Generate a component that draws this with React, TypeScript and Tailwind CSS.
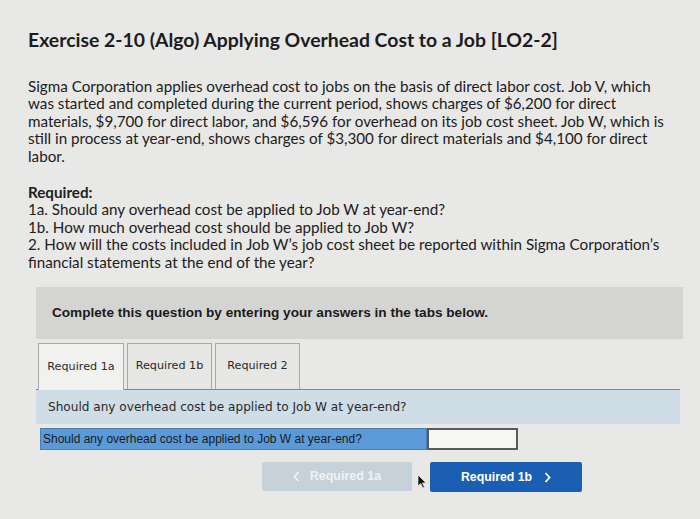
import React from "react";

export default function App() {
  const sans = { fontFamily: "Lato, 'Open Sans', sans-serif" };
  return (
    <div className="relative w-[700px] h-[519px] overflow-hidden bg-[#e8e8e6] text-[#202020]">
      <div className="pl-[28px] pt-[28px]">
        <h1 style={sans} className="text-[19.4px] font-bold leading-[23px] text-[#1c1c1c]">
          Exercise 2-10 (Algo) Applying Overhead Cost to a Job [LO2-2]
        </h1>
        <div style={sans} className="mt-[27px] text-[15.2px] leading-[17.4px]">
          <div className="whitespace-nowrap">Sigma Corporation applies overhead cost to jobs on the basis of direct labor cost. Job V, which</div>
          <div className="whitespace-nowrap">was started and completed during the current period, shows charges of $6,200 for direct</div>
          <div className="whitespace-nowrap">materials, $9,700 for direct labor, and $6,596 for overhead on its job cost sheet. Job W, which is</div>
          <div className="whitespace-nowrap">still in process at year-end, shows charges of $3,300 for direct materials and $4,100 for direct</div>
          <div className="whitespace-nowrap">labor.</div>
        </div>
        <div style={sans} className="mt-[19px] text-[15.2px] leading-[17.4px]">
          <div className="font-bold">Required:</div>
          <div className="whitespace-nowrap">1a. Should any overhead cost be applied to Job W at year-end?</div>
          <div className="whitespace-nowrap">1b. How much overhead cost should be applied to Job W?</div>
          <div className="whitespace-nowrap">2. How will the costs included in Job W’s job cost sheet be reported within Sigma Corporation’s</div>
          <div className="whitespace-nowrap">financial statements at the end of the year?</div>
        </div>
      </div>

      <div className="ml-[36px] mt-[16px] w-[647px] h-[52px] bg-[#d4d4d2] flex items-center pl-[16px]">
        <span style={{ fontFamily: "'Liberation Sans', Arial, sans-serif" }} className="text-[13.6px] font-bold text-[#1a1a1a]">
          Complete this question by entering your answers in the tabs below.
        </span>
      </div>

      <div className="ml-[38px] mt-[4px] flex gap-[3px] items-end relative z-10" style={{ fontFamily: "'DejaVu Sans', Verdana, sans-serif" }}>
        <div className="w-[86px] h-[47px] bg-[#f1f1ef] border border-b-0 border-[#a8a8a8] flex items-center justify-center text-[11.2px] text-[#2a2a2a] -mb-px">
          Required 1a
        </div>
        <div className="w-[85px] h-[46px] bg-[#e6e6e4] border border-b-0 border-[#a8a8a8] flex items-center justify-center text-[11.2px] text-[#2a2a2a]">
          Required 1b
        </div>
        <div className="w-[85px] h-[46px] bg-[#e6e6e4] border border-b-0 border-[#a8a8a8] flex items-center justify-center text-[11.2px] text-[#2a2a2a]">
          Required 2
        </div>
      </div>
      <div className="ml-[36px] w-[644px] h-[35px] bg-[#cedde6] border-t border-[#7f8890] flex items-center pl-[12px]">
        <span style={{ fontFamily: "'DejaVu Sans', Verdana, sans-serif" }} className="text-[12.1px] text-[#2a2a2a]">
          Should any overhead cost be applied to Job W at year-end?
        </span>
      </div>

      <div className="ml-[40px] mt-[4px] flex h-[22px]">
        <div className="w-[387px] h-full bg-[#5b9ad9] border border-[#4a7fb5] flex items-center pl-[2px]">
          <span style={{ fontFamily: "'Liberation Sans', Arial, sans-serif" }} className="text-[12px] text-[#1a1a1a]">
            Should any overhead cost be applied to Job W at year-end?
          </span>
        </div>
        <div className="w-[91px] h-full bg-[#f6f6f4] border-2 border-[#5a5a5a]" />
      </div>

      <div className="ml-[262px] mt-[12px] flex gap-[18px]" style={{ fontFamily: "'Liberation Sans', Arial, sans-serif" }}>
        <div className="w-[150px] h-[29px] bg-[#c6d1da] rounded-[2px] flex items-center justify-center gap-[10px] text-[12.5px] font-bold text-[#eef2f5]">
          <svg width="7" height="11" viewBox="0 0 7 11"><path d="M5.5 1 L1.5 5.5 L5.5 10" stroke="#eef2f5" strokeWidth="1.8" fill="none" /></svg>
          <span>Required 1a</span>
        </div>
        <div className="w-[152px] h-[30px] bg-[#1b5fb4] rounded-[2px] flex items-center justify-center gap-[12px] text-[12.3px] font-bold text-white">
          <span>Required 1b</span>
          <svg width="7" height="11" viewBox="0 0 7 11"><path d="M1.5 1 L5.5 5.5 L1.5 10" stroke="#ffffff" strokeWidth="1.8" fill="none" /></svg>
        </div>
      </div>

      <svg className="absolute left-[417px] top-[474px]" width="10" height="15" viewBox="0 0 10 15">
        <path d="M1 1 L1 12 L3.8 9.5 L5.8 14 L7.4 13.3 L5.5 8.9 L9 8.9 Z" fill="#111" stroke="#fff" strokeWidth="0.6" />
      </svg>
    </div>
  );
}
